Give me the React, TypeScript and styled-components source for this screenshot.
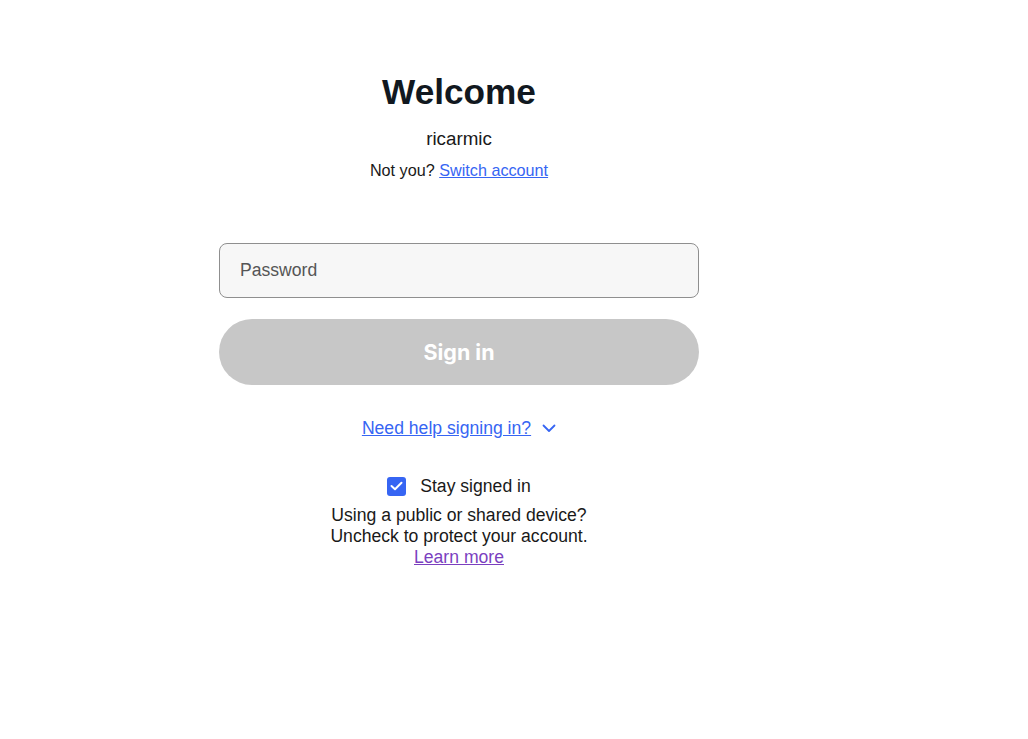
import React from "react";
import styled, { createGlobalStyle } from "styled-components";

const Global = createGlobalStyle`
  html, body { margin: 0; padding: 0; background: #ffffff; }
  body { font-family: "Liberation Sans", Arial, sans-serif; color: #191919; }
`;

const Page = styled.main`
  width: 480px;
  margin-left: 219px;
  padding-top: 72px;
  display: flex;
  flex-direction: column;
  align-items: stretch;
  text-align: center;
`;

const Title = styled.h1`
  margin: 0;
  font-size: 35.2px;
  line-height: 40px;
  font-weight: 700;
  color: #111820;
`;

const UserName = styled.div`
  margin-top: 15px;
  font-size: 18.8px;
  line-height: 24px;
`;

const NotYou = styled.div`
  margin-top: 9px;
  font-size: 16.2px;
  line-height: 20px;
`;

const Link = styled.a<{ $visited?: boolean }>`
  color: ${(p) => (p.$visited ? "#7b3fbf" : "#3665f3")};
  text-decoration: underline;
  cursor: pointer;
`;

const PasswordField = styled.input`
  box-sizing: border-box;
  margin-top: 63px;
  width: 100%;
  height: 55px;
  border: 1px solid #8f8f8f;
  border-radius: 8px;
  background: #f7f7f7;
  padding: 0 20px;
  font-family: "Liberation Sans", Arial, sans-serif;
  font-size: 17.6px;
  color: #191919;
  outline: none;
  &::placeholder { color: #555555; opacity: 1; }
`;

const SignInButton = styled.button`
  margin-top: 21px;
  width: 100%;
  height: 66px;
  border: none;
  border-radius: 33px;
  background: #c7c7c7;
  color: #ffffff;
  font-family: Inter, Roboto, sans-serif;
  font-weight: 700;
  font-size: 21.5px;
  cursor: default;
`;

const HelpRow = styled.div`
  margin-top: 32px;
  display: flex;
  justify-content: center;
  align-items: center;
  gap: 11px;
  font-size: 17.6px;
  line-height: 22px;
`;

const CheckRow = styled.label`
  margin-top: 35px;
  display: flex;
  justify-content: center;
  align-items: center;
  gap: 14px;
  font-size: 17.6px;
  line-height: 24px;
`;

const CheckBox = styled.span`
  width: 19px;
  height: 19px;
  border-radius: 3px;
  background: #3665f3;
  display: inline-flex;
  align-items: center;
  justify-content: center;
`;

const Note = styled.p`
  margin: 7px 0 0;
  font-size: 17.6px;
  line-height: 21px;
`;

export default function App() {
  return (
    <>
      <Global />
      <Page>
        <Title>Welcome</Title>
        <UserName>ricarmic</UserName>
        <NotYou>
          Not you? <Link>Switch account</Link>
        </NotYou>
        <PasswordField type="password" placeholder="Password" />
        <SignInButton>Sign in</SignInButton>
        <HelpRow>
          <Link>Need help signing in?</Link>
          <svg width="14" height="9" viewBox="0 0 14 9" fill="none">
            <path d="M1.5 1.5 L7 7 L12.5 1.5" stroke="#3665f3" strokeWidth="1.8" strokeLinecap="round" strokeLinejoin="round" />
          </svg>
        </HelpRow>
        <CheckRow>
          <CheckBox>
            <svg width="13" height="10" viewBox="0 0 13 10" fill="none">
              <path d="M1.5 5 L5 8.2 L11.5 1.8" stroke="#ffffff" strokeWidth="2" strokeLinecap="round" strokeLinejoin="round" />
            </svg>
          </CheckBox>
          Stay signed in
        </CheckRow>
        <Note>
          Using a public or shared device?
          <br />
          Uncheck to protect your account.
          <br />
          <Link $visited>Learn more</Link>
        </Note>
      </Page>
    </>
  );
}
